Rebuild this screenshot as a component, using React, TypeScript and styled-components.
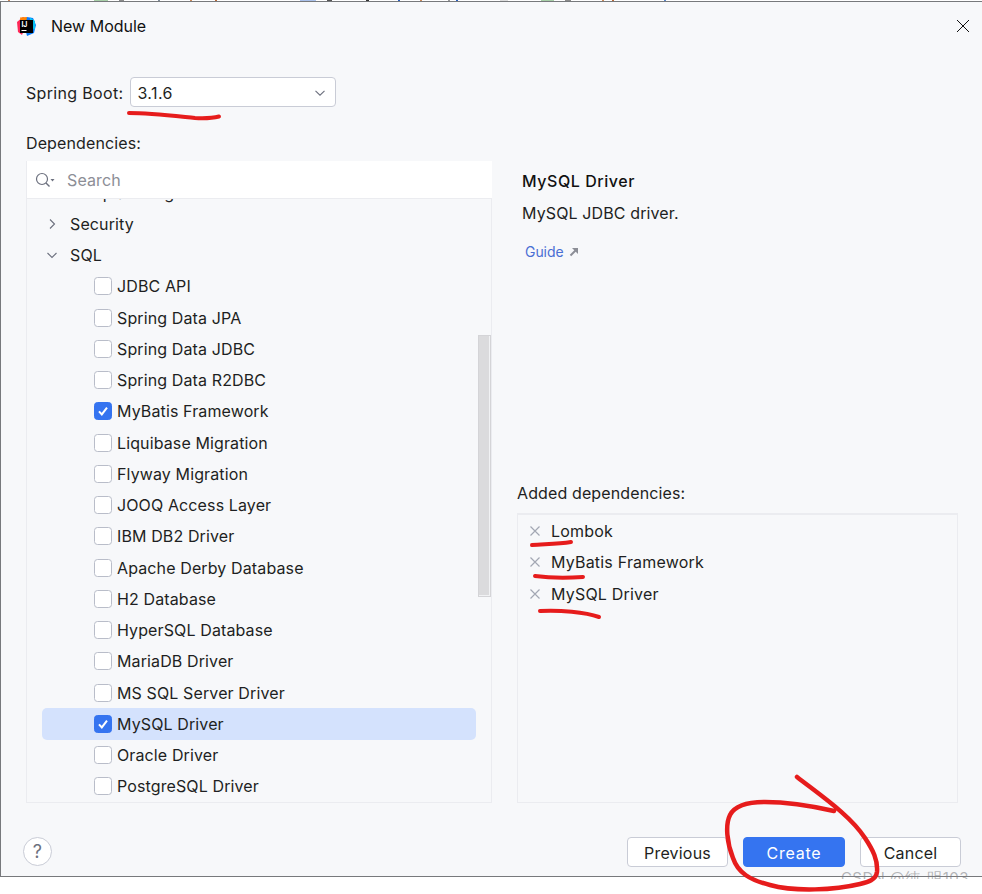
import React from "react";
import styled, { createGlobalStyle } from "styled-components";

const Global = createGlobalStyle`
  html, body { margin: 0; padding: 0; background: #fff; }
  body { font-family: Inter, "Liberation Sans", sans-serif; color: #1e1f22; letter-spacing: 0.12px; }
  * { box-sizing: border-box; }
`;

const Page = styled.div`
  position: relative;
  width: 982px;
  height: 894px;
  overflow: hidden;
  background: #fff;
`;

const bits: [number, number, string][] = [
  [8, 2, "#c98a5a"], [94, 14, "#a8cfa8"], [119, 5, "#8a8a8a"], [158, 2, "#7f8c9a"],
  [190, 2, "#c98a5a"], [215, 2, "#b86a3a"], [300, 16, "#a9c0ea"], [327, 5, "#555"],
  [366, 3, "#333"], [398, 2, "#2a5fc0"], [420, 2, "#c98a5a"], [448, 2, "#999"],
  [456, 2, "#2a5fc0"], [500, 8, "#ddd"], [541, 13, "#a8cfa8"], [565, 6, "#8a8a8a"],
  [602, 2, "#c98a5a"], [612, 2, "#b86a3a"], [664, 2, "#5a86c8"],
];
const bitStops = bits
  .map(([x, w, c]) => `#fff ${x}px, ${c} ${x}px, ${c} ${x + w}px, #fff ${x + w}px`)
  .join(", ");

const BackdropStrip = styled.div`
  height: 1px;
  background: linear-gradient(90deg, ${bitStops});
`;

const TopEdge = styled.div`
  height: 1px;
  background: #77797c;
`;

const Dialog = styled.div`
  width: 982px;
  height: 875px;
  background: #f7f8fa;
  border-left: 1px solid #77797c;
  border-bottom: 1px solid #77797c;
  display: flex;
  flex-direction: column;
`;

const TitleBar = styled.div`
  height: 48px;
  flex: none;
  display: flex;
  align-items: center;
  padding: 0 12px 0 15px;
  font-size: 16px;
  letter-spacing: 0;
  color: #111;
  gap: 15px;
`;

const Title = styled.span`
  flex: 1;
`;

const Body = styled.div`
  flex: 1;
  display: flex;
  padding: 27px 21px 0 25px;
  min-height: 0;
`;

const LeftCol = styled.div`
  width: 466px;
  flex: none;
  display: flex;
  flex-direction: column;
`;

const VersionRow = styled.div`
  display: flex;
  align-items: center;
  gap: 7px;
  height: 30px;
  font-size: 16px;
  letter-spacing: 0.33px;
`;

const VersionLabel = styled.span`
  padding-top: 2px;
`;

const Select = styled.div`
  width: 206px;
  height: 30px;
  background: #fff;
  border: 1px solid #c9ccd6;
  border-radius: 4px;
  display: flex;
  align-items: center;
  justify-content: space-between;
  padding: 2px 10px 0 6px;
  letter-spacing: 0.4px;
`;

const FieldLabel = styled.div`
  font-size: 16px;
  line-height: 20px;
  margin-top: 26px;
  margin-bottom: 8px;
`;

const TreePanel = styled.div`
  height: 642px;
  border: 1px solid #ebecf0;
  display: flex;
  flex-direction: column;
  min-height: 0;
`;

const SearchBar = styled.div`
  height: 38px;
  flex: none;
  background: #fff;
  border-bottom: 1px solid #ebecf0;
  margin: -1px -1px 0 0;
  display: flex;
  align-items: center;
  gap: 12px;
  padding: 0 0 0 8px;
  font-size: 16px;
  color: #8c8e96;
`;

const TreeWrap = styled.div`
  position: relative;
  flex: 1;
  overflow: hidden;
`;

const Clipped = styled.div`
  height: 9.25px;
  overflow: hidden;
  font-size: 16px;
  padding-left: 43px;
  line-height: 20px;
`;

const ClippedText = styled.div`
  margin-top: -16px;
  white-space: nowrap;
`;

const GroupRow = styled.div`
  height: 31.25px;
  display: flex;
  align-items: center;
  font-size: 16px;
  padding-left: 20px;
  gap: 13px;
`;

const DepRow = styled.div<{ $selected?: boolean }>`
  height: 31.25px;
  width: 434px;
  margin-left: 15px;
  display: flex;
  align-items: center;
  gap: 5px;
  padding-left: 52px;
  font-size: 16px;
  border-radius: 5px;
  background: ${(p) => (p.$selected ? "#d4e2fd" : "transparent")};
`;

const Box = styled.span<{ $checked?: boolean }>`
  width: 18px;
  height: 18px;
  flex: none;
  border-radius: 3.5px;
  border: 1px solid ${(p) => (p.$checked ? "#3574f0" : "#b9bdc9")};
  background: ${(p) => (p.$checked ? "#3574f0" : "#fff")};
  display: flex;
  align-items: center;
  justify-content: center;
`;

const ScrollThumb = styled.div`
  position: absolute;
  left: 451px;
  top: 136px;
  width: 13px;
  height: 262px;
  background: #dbdbdd;
  border: 1px solid #d4d4d7;
  box-shadow: inset -1px -1px 0 #f1f2f4;
`;

const RightCol = styled.div`
  flex: 1;
  min-width: 0;
  display: flex;
  flex-direction: column;
  padding-left: 25px;
`;

const Info = styled.div`
  height: 406px;
  padding: 94px 0 0 5px;
`;

const InfoTitle = styled.div`
  font-size: 16px;
  font-weight: 500;
  letter-spacing: 0.55px;
  line-height: 20px;
  color: #111;
`;

const InfoText = styled.div`
  font-size: 16px;
  line-height: 20px;
  margin-top: 12px;
`;

const Guide = styled.div`
  margin: 19px 0 0 3px;
  display: flex;
  align-items: center;
  gap: 5px;
  font-size: 14px;
  letter-spacing: -0.05px;
  line-height: 20px;
  color: #4a6fd4;
`;

const AddedLabel = styled.div`
  font-size: 16px;
  line-height: 20px;
  margin-bottom: 10px;
`;

const AddedPanel = styled.div`
  width: 441px;
  height: 290px;
  border: 1px solid #ebecf0;
  border-top-width: 2px;
  padding: 0 0 0 11px;
`;

const AddedRow = styled.div`
  height: 31.5px;
  display: flex;
  align-items: center;
  gap: 10px;
  font-size: 16px;
  letter-spacing: 0.2px;
`;

const Footer = styled.div`
  height: 50px;
  flex: none;
  display: flex;
  align-items: center;
  padding: 2px 21px 0 22px;
  gap: 15px;
`;

const Help = styled.div`
  width: 29px;
  height: 29px;
  border-radius: 50%;
  background: #fff;
  border: 1px solid #c9ccd6;
  color: #6c707e;
  font-size: 18px;
  display: flex;
  align-items: center;
  justify-content: center;
  margin: -2px auto 0 0;
`;

const Button = styled.div<{ $primary?: boolean }>`
  width: ${(p) => (p.$primary ? 102 : 101)}px;
  height: 30px;
  padding-top: 2px;
  border-radius: 4px;
  font-size: 16px;
  display: flex;
  align-items: center;
  justify-content: center;
  letter-spacing: ${(p) => (p.$primary ? "0.75px" : "0.2px")};
  background: ${(p) => (p.$primary ? "#3574f0" : "#fff")};
  color: ${(p) => (p.$primary ? "#fff" : "#1e1f22")};
  border: 1px solid ${(p) => (p.$primary ? "#3574f0" : "#c9ccd6")};
`;

const Ink = styled.svg`
  position: absolute;
  inset: 0;
  width: 982px;
  height: 894px;
  pointer-events: none;
`;

const Watermark = styled.div`
  position: absolute;
  left: 841px;
  top: 868px;
  height: 11px;
  overflow: hidden;
  font-size: 15px;
  line-height: 20px;
  letter-spacing: 0.4px;
  white-space: nowrap;
  color: rgba(120, 120, 125, 0.55);
`;

const Check = () => (
  <svg width="12" height="12" viewBox="0 0 12 12">
    <path d="M2 6.4 L4.8 9.4 L10 2.6" fill="none" stroke="#fff" strokeWidth="2" />
  </svg>
);

const Chevron = ({ open }: { open?: boolean }) => (
  <svg width="10" height="10" viewBox="0 0 10 10">
    <path
      d={open ? "M0.5 3 L5 7.5 L9.5 3" : "M3 0.5 L7.5 5 L3 9.5"}
      fill="none"
      stroke="#6c707e"
      strokeWidth="1.1"
    />
  </svg>
);

const Logo = () => (
  <svg width="20" height="20" viewBox="0 0 20 20">
    <path d="M1 6 L7 1 L12 4 L6 19 L2 16 Z" fill="#fe2857" />
    <path d="M4 1.5 L11 1 L12 6 L5 8 Z" fill="#ff8100" />
    <path d="M11 1 L17 2 L20 9 L18 17 L11 20 L9 12 Z" fill="#087cfa" />
    <path d="M14 1.5 L19 5 L19 14 L14 10 Z" fill="#07c3f2" />
    <rect x="4" y="4" width="13" height="13" fill="#000" />
    <rect x="5.5" y="14" width="5" height="1" fill="#fff" />
    <text x="5.4" y="11.2" fontFamily="Inter, sans-serif" fontSize="7" fontWeight="700" fill="#fff">IJ</text>
  </svg>
);

const SearchIcon = () => (
  <svg width="20" height="16" viewBox="0 0 20 16">
    <circle cx="7" cy="7" r="5.5" fill="none" stroke="#6c707e" strokeWidth="1.2" />
    <path d="M11 11 L14.500 14.500" stroke="#6c707e" strokeWidth="1.4" />
    <path d="M15.500 7 H19.500 L17.500 9.500 Z" fill="#6c707e" />
  </svg>
);

const CloseIcon = () => (
  <svg width="14" height="14" viewBox="0 0 14 14">
    <path d="M1 1 L13 13 M13 1 L1 13" stroke="#111" strokeWidth="1" />
  </svg>
);

const RemoveIcon = () => (
  <svg width="12" height="12" viewBox="0 0 12 12">
    <path d="M1.5 1.5 L10.5 10.5 M10.5 1.5 L1.5 10.5" stroke="#a3a7b3" strokeWidth="1.2" />
  </svg>
);

const ExternalArrow = () => (
  <svg width="10" height="10" viewBox="0 0 10 10">
    <path d="M1.5 8.5 L7.500 2.500" fill="none" stroke="#8c8e96" strokeWidth="2" />
    <path d="M3 1 H9 V7 Z" fill="#8c8e96" />
  </svg>
);

const deps: { name: string; checked?: boolean; selected?: boolean }[] = [
  { name: "JDBC API" },
  { name: "Spring Data JPA" },
  { name: "Spring Data JDBC" },
  { name: "Spring Data R2DBC" },
  { name: "MyBatis Framework", checked: true },
  { name: "Liquibase Migration" },
  { name: "Flyway Migration" },
  { name: "JOOQ Access Layer" },
  { name: "IBM DB2 Driver" },
  { name: "Apache Derby Database" },
  { name: "H2 Database" },
  { name: "HyperSQL Database" },
  { name: "MariaDB Driver" },
  { name: "MS SQL Server Driver" },
  { name: "MySQL Driver", checked: true, selected: true },
  { name: "Oracle Driver" },
  { name: "PostgreSQL Driver" },
];

const added = ["Lombok", "MyBatis Framework", "MySQL Driver"];

export default function App() {
  return (
    <Page>
      <Global />
      <BackdropStrip />
      <TopEdge />
      <Dialog>
        <TitleBar>
          <Logo />
          <Title>New Module</Title>
          <CloseIcon />
        </TitleBar>
        <Body>
          <LeftCol>
            <VersionRow>
              <VersionLabel>Spring Boot:</VersionLabel>
              <Select>
                3.1.6
                <svg width="10" height="6" viewBox="0 0 10 6">
                  <path d="M0.5 0.8 L5 5.2 L9.5 0.8" fill="none" stroke="#6c707e" strokeWidth="1.1" />
                </svg>
              </Select>
            </VersionRow>
            <FieldLabel>Dependencies:</FieldLabel>
            <TreePanel>
              <SearchBar>
                <SearchIcon />
                Search
              </SearchBar>
              <TreeWrap>
                <Clipped>
                  <ClippedText>Template Engines</ClippedText>
                </Clipped>
                <GroupRow>
                  <Chevron />
                  Security
                </GroupRow>
                <GroupRow>
                  <Chevron open />
                  SQL
                </GroupRow>
                {deps.map((d) => (
                  <DepRow key={d.name} $selected={d.selected}>
                    <Box $checked={d.checked}>{d.checked && <Check />}</Box>
                    {d.name}
                  </DepRow>
                ))}
                <ScrollThumb />
              </TreeWrap>
            </TreePanel>
          </LeftCol>
          <RightCol>
            <Info>
              <InfoTitle>MySQL Driver</InfoTitle>
              <InfoText>MySQL JDBC driver.</InfoText>
              <Guide>
                Guide
                <ExternalArrow />
              </Guide>
            </Info>
            <AddedLabel>Added dependencies:</AddedLabel>
            <AddedPanel>
              {added.map((a) => (
                <AddedRow key={a}>
                  <RemoveIcon />
                  {a}
                </AddedRow>
              ))}
            </AddedPanel>
          </RightCol>
        </Body>
        <Footer>
          <Help>?</Help>
          <Button>Previous</Button>
          <Button $primary>Create</Button>
          <Button>Cancel</Button>
        </Footer>
      </Dialog>
      <Watermark>CSDN @纯_明103</Watermark>
      <Ink viewBox="0 0 982 894" fill="none" stroke="#e61c1c" strokeLinecap="round" strokeLinejoin="round">
        <path d="M129 113 C150 113 175 116 195 118 C205 118.500 213 118 219 116.500" strokeWidth="4" />
        <path d="M532 545 C545 544 558 544 571 542" strokeWidth="4" />
        <path d="M535 576 C550 578 568 578 583 577" strokeWidth="4" />
        <path d="M540 611 C560 610 585 612 599 617" strokeWidth="4" />
        <path d="M797 777 C820 795 850 815 865 838 C873 850 878 860 877 872 C876 880 868 882 860 884 C835 890 795 892 770 885 C750 880 738 873 733 858 C727 843 725 825 730 815 C735 805 748 802 765 802 C790 802 812 806 834 811" strokeWidth="4.500" />
      </Ink>
    </Page>
  );
}
